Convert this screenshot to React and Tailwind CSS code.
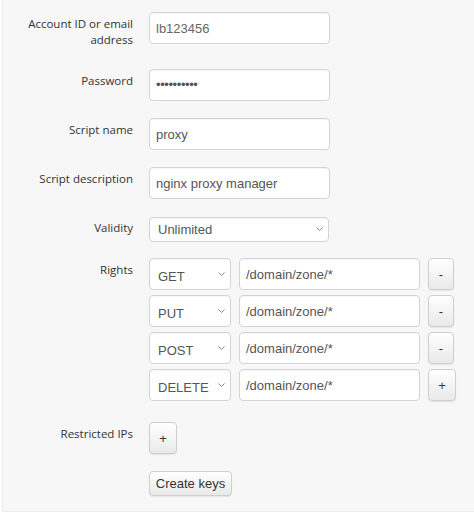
import { useState } from 'react';

const labelCls = "w-[130px] shrink-0 text-right pt-[4px] text-[11.5px] leading-[16px] text-[#333] [font-family:'Open_Sans',sans-serif]";
const inputCls = "rounded-[4px] border border-[#d4d4d4] bg-white px-[6px] text-[13px] text-[#555] shadow-[inset_0_1px_1px_rgba(0,0,0,0.04)] outline-none [font-family:'Liberation_Sans',Arial,sans-serif]";
const btnCls = "flex items-center justify-center rounded-[4px] border border-[#cfcfcf] bg-gradient-to-b from-white to-[#e9e9e9] text-[13px] text-[#333] shadow-[0_1px_1px_rgba(0,0,0,0.08)] [font-family:'Liberation_Sans',Arial,sans-serif]";

const Chevron = () => (
    <svg className="pointer-events-none absolute right-[6px] top-1/2 -translate-y-1/2 w-[7px] h-[4px]" viewBox="0 0 7 4" fill="none">
        <path d="M0.5 0.5l3 3 3-3" stroke="#8a8a8a" strokeWidth="1" />
    </svg>
);

const Row = ({ label, children, className = '' }) => (
    <div className={`flex ${className}`}>
        <div className={labelCls}>{label}</div>
        <div className="ml-[16px]">{children}</div>
    </div>
);

const App = () => {
    const [rights] = useState([
        { method: 'GET', path: '/domain/zone/*', action: '-' },
        { method: 'PUT', path: '/domain/zone/*', action: '-' },
        { method: 'POST', path: '/domain/zone/*', action: '-' },
        { method: 'DELETE', path: '/domain/zone/*', action: '+' },
    ]);

    return (
        <div className="w-[474px] h-[519px] bg-white">
            <div className="ml-[2px] h-[512px] border-l border-b border-[#ececec] bg-[#f7f7f7] pt-[12px]">
                <Row label={<>Account ID or email<br />address</>} className="mb-[21px]">
                    <input readOnly defaultValue="lb123456" className={`${inputCls} h-[32px] w-[181px] text-[#666]`} />
                </Row>

                <Row label="Password" className="mb-[17px]">
                    <div className={`${inputCls} h-[32px] w-[181px] flex items-center text-[#222] text-[9px] tracking-[-0.4px]`}>
                        ••••••••••
                    </div>
                </Row>

                <Row label="Script name" className="mb-[17px]">
                    <input readOnly defaultValue="proxy" className={`${inputCls} h-[32px] w-[181px]`} />
                </Row>

                <Row label="Script description" className="mb-[17px]">
                    <input readOnly defaultValue="nginx proxy manager" className={`${inputCls} h-[32px] w-[181px]`} />
                </Row>

                <Row label="Validity" className="mb-[16px]">
                    <div className="relative w-[180px]">
                        <select defaultValue="Unlimited" className={`${inputCls} h-[25px] w-full appearance-none pl-[8px]`}>
                            <option>Unlimited</option>
                        </select>
                        <Chevron />
                    </div>
                </Row>

                <Row label="Rights" className="mb-[21px]">
                    <div className="flex flex-col gap-[5px]">
                        {rights.map((r, i) => (
                            <div key={i} className="flex gap-[8px]">
                                <div className="relative w-[82px]">
                                    <select defaultValue={r.method} className={`${inputCls} h-[32px] w-full appearance-none pl-[8px] pt-[5px]`}>
                                        <option>GET</option>
                                        <option>PUT</option>
                                        <option>POST</option>
                                        <option>DELETE</option>
                                    </select>
                                    <Chevron />
                                </div>
                                <input readOnly defaultValue={r.path} className={`${inputCls} h-[32px] w-[181px]`} />
                                <button className={`${btnCls} h-[32px] ${r.action === '+' ? 'w-[28px]' : 'w-[26px]'} text-[11px]`}>
                                    {r.action}
                                </button>
                            </div>
                        ))}
                    </div>
                </Row>

                <Row label="Restricted IPs" className="mb-[17px]">
                    <button className={`${btnCls} h-[32px] w-[28px] text-[11px]`}>+</button>
                </Row>

                <Row label="">
                    <button className={`${btnCls} h-[25px] w-[83px]`}>Create keys</button>
                </Row>
            </div>
        </div>
    );
};

export default App;
